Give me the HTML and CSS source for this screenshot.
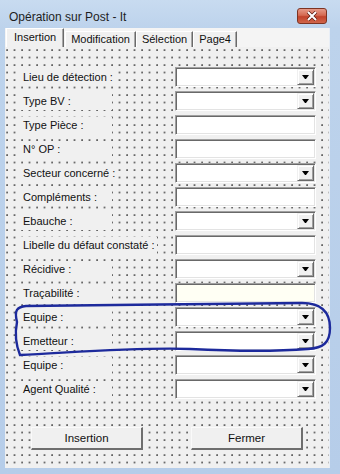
FILE: index.html
```html
<!DOCTYPE html>
<html lang="fr">
<head>
    <meta charset="UTF-8">
    <title>Opération sur Post - It</title>
    <link rel="stylesheet" href="styles.css">
</head>
<body>
    <div class="window">
        <!-- Title bar -->
        <div class="titlebar">
            <span class="title">Opération sur Post - It</span>
            <span class="close">
                <svg width="12" height="10" viewBox="0 0 12 10"><path d="M2 1 L10 9 M10 1 L2 9" stroke="#5a1a10" stroke-width="3.4"/><path d="M2 1 L10 9 M10 1 L2 9" stroke="#fff" stroke-width="2"/></svg>
            </span>
        </div>
        <div class="client">
            <!-- Tabs -->
            <div class="tabs">
                <div class="tab active">Insertion</div>
                <div class="tab">Modification</div>
                <div class="tab">Sélection</div>
                <div class="tab">Page4</div>
            </div>
            <div class="page">
                <div class="form">
                    <div class="row"><span class="label">Lieu de détection :</span><div class="field"><span class="drop"></span></div></div>
                    <div class="row"><span class="label">Type BV :</span><div class="field"><span class="drop"></span></div></div>
                    <div class="row"><span class="label">Type Pièce :</span><div class="field"></div></div>
                    <div class="row"><span class="label">N° OP :</span><div class="field"></div></div>
                    <div class="row"><span class="label">Secteur concerné :</span><div class="field"><span class="drop"></span></div></div>
                    <div class="row"><span class="label">Compléments :</span><div class="field"></div></div>
                    <div class="row"><span class="label">Ebauche :</span><div class="field"><span class="drop"></span></div></div>
                    <div class="row"><span class="label">Libelle du défaut constaté :</span><div class="field"></div></div>
                    <div class="row"><span class="label">Récidive :</span><div class="field"><span class="drop"></span></div></div>
                    <div class="row"><span class="label">Traçabilité :</span><div class="field tinted"></div></div>
                    <div class="row"><span class="label">Equipe :</span><div class="field"><span class="drop"></span></div></div>
                    <div class="row"><span class="label">Emetteur :</span><div class="field"><span class="drop"></span></div></div>
                    <div class="row"><span class="label">Equipe :</span><div class="field"><span class="drop"></span></div></div>
                    <div class="row"><span class="label">Agent Qualité :</span><div class="field"><span class="drop"></span></div></div>
                </div>
                <div class="buttons">
                    <div class="button">Insertion</div>
                    <div class="button">Fermer</div>
                </div>
            </div>
        </div>
        <!-- Hand drawn marker around Equipe / Emetteur -->
        <svg class="scribble" width="340" height="474" viewBox="0 0 340 474">
            <path d="M17 322 C14 310 17 307 26 306 C110 305 220 304 302 303 C322 303 330 313 330 328 C330 343 323 348 308 349 C270 352 230 351 190 349 C140 347 80 352 20 355 C16 345 15 332 17 322" fill="none" stroke="#1d2a9c" stroke-width="2.4" stroke-linecap="round"/>
        </svg>
    </div>
</body>
</html>
```

FILE: styles.css
```css
body {
    margin: 0;
    font-family: "Liberation Sans", Arial, sans-serif;
    font-size: 11px;
    color: #000;
}

.window {
    position: relative;
    width: 340px;
    height: 474px;
    box-sizing: border-box;
    padding: 0 10px 6px 5px;
    display: flex;
    flex-direction: column;
    background: linear-gradient(180deg, #c8dbf0 0, #bdd3ec 28px, #b6cde9 100%);
}

/* Title bar */
.titlebar {
    height: 28px;
    display: flex;
    align-items: flex-start;
    padding-left: 4px;
}

.title {
    font-size: 12px;
    line-height: 14px;
    margin-top: 10px;
    color: #1e1e1e;
}

.close {
    margin-left: auto;
    margin-right: 3px;
    margin-top: 8px;
    width: 30px;
    height: 16px;
    box-sizing: border-box;
    border: 1px solid #7d3322;
    border-radius: 3px;
    background: linear-gradient(180deg, #e59a88 0, #d56a52 45%, #c2432b 55%, #d0654a 100%);
    display: flex;
    align-items: center;
    justify-content: center;
}

/* Client area */
.client {
    flex: 1;
    background-color: #f4f4f4;
    display: flex;
    flex-direction: column;
    border-right: 1px solid #e8eef6;
}

.tabs {
    height: 19px;
    display: flex;
    align-items: flex-end;
    padding-left: 1px;
}

.tab {
    height: 15px;
    line-height: 15px;
    padding: 0 5px;
    border-top: 1px solid #fff;
    border-left: 1px solid #fff;
    border-right: 1px solid #6a6a6a;
    box-shadow: inset -1px 0 0 #a8a8a8;
    background-color: #f0f0f0;
    color: #111;
}

.tab.active {
    height: 18px;
    line-height: 16px;
    padding: 0 7px;
    margin-right: 1px;
}

/* Page with design grid */
.page {
    flex: 1;
    background-color: #f0f0f0;
    background-image: radial-gradient(circle at 1px 1px, #1a1a1a 0.5px, transparent 0.9px);
    background-size: 7.5px 7.5px;
    background-position: 1px 2px;
}

.form {
    padding: 20px 0 0 16px;
    display: flex;
    flex-direction: column;
    gap: 4px;
}

.row {
    display: flex;
    align-items: center;
    height: 20px;
}

.label {
    min-width: 91px;
    box-sizing: border-box;
    padding: 0 3px 0 2px;
    line-height: 17px;
    background-color: #f0f0f0;
    margin-right: auto;
    color: #111;
}

.field {
    width: 141px;
    height: 20px;
    box-sizing: border-box;
    margin-right: 13px;
    background-color: #fff;
    border: 1px solid;
    border-color: #a0a0a0 #fff #fff #a0a0a0;
    box-shadow: inset 1px 1px 0 #696969, inset -1px -1px 0 #e3e3e3;
    padding: 1px;
    display: flex;
    justify-content: flex-end;
}

.field.tinted {
    background-color: #fffff4;
}

.drop {
    width: 17px;
    height: 16px;
    box-sizing: border-box;
    background-color: #f0f0f0;
    border: 1px solid;
    border-color: #f0f0f0 #696969 #696969 #f0f0f0;
    box-shadow: inset 1px 1px 0 #fff, inset -1px -1px 0 #a0a0a0;
    display: flex;
    align-items: center;
    justify-content: center;
}

.drop::before {
    content: '';
    width: 1px;
    height: 0;
    border-left: 3px solid transparent;
    border-right: 3px solid transparent;
    border-top: 4px solid #000;
}

/* Buttons */
.buttons {
    display: flex;
    gap: 48px;
    padding-left: 26px;
    margin-top: 28px;
}

.button {
    width: 112px;
    height: 23px;
    box-sizing: border-box;
    background-color: #f0f0f0;
    border-top: 1px solid #fafafa;
    border-left: 1px solid #fafafa;
    border-right: 2px solid #6e6e6e;
    border-bottom: 2px solid #6e6e6e;
    text-align: center;
    line-height: 20px;
    font-size: 11.5px;
    color: #111;
}

.scribble {
    position: absolute;
    left: 0;
    top: 0;
    pointer-events: none;
}
```
